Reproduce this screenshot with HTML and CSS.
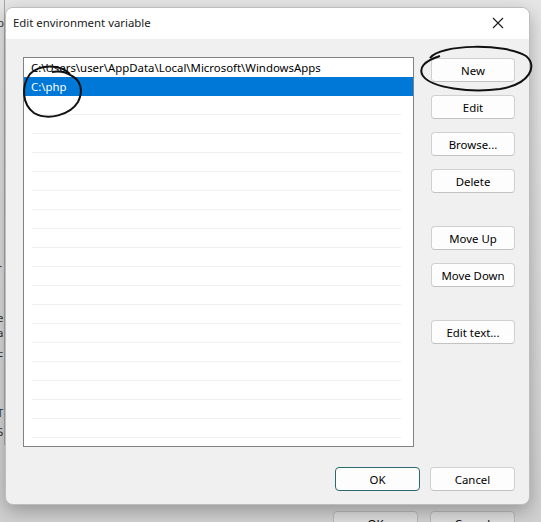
FILE: index.html
```html
<!DOCTYPE html>
<html lang="en">
<head>
    <meta charset="UTF-8">
    <meta name="viewport" content="width=device-width, initial-scale=1.0">
    <title>Edit environment variable</title>
    <link rel="stylesheet" href="styles.css">
</head>
<body>
    <div class="backwin">
        <div class="back-side">
            <span class="frag f-b">b</span>
            <span class="frag f-r">r</span>
            <span class="frag f-c">:</span>
            <span class="frag f-e">e</span>
            <span class="frag f-a">a</span>
            <span class="frag f-f">F</span>
            <span class="frag f-t">T</span>
            <span class="frag f-s">S</span>
        </div>
        <div class="back-footer">
            <button class="back-btn">OK</button>
            <button class="back-btn">Cancel</button>
        </div>
    </div>

    <div class="dialog">
        <div class="titlebar">
            <span class="title">Edit environment variable</span>
            <svg class="close" width="12" height="12" viewBox="0 0 12 12">
                <path d="M1 1 L11 11 M11 1 L1 11" stroke="#1a1a1a" stroke-width="1.1" fill="none"/>
            </svg>
        </div>

        <div class="content">
            <div class="listbox">
                <div class="row">C:\Users\user\AppData\Local\Microsoft\WindowsApps</div>
                <div class="row selected">C:\php</div>
                <div class="row empty"></div>
                <div class="row empty"></div>
                <div class="row empty"></div>
                <div class="row empty"></div>
                <div class="row empty"></div>
                <div class="row empty"></div>
                <div class="row empty"></div>
                <div class="row empty"></div>
                <div class="row empty"></div>
                <div class="row empty"></div>
                <div class="row empty"></div>
                <div class="row empty"></div>
                <div class="row empty"></div>
                <div class="row empty"></div>
                <div class="row empty"></div>
                <div class="row empty"></div>
                <div class="row empty"></div>
                <div class="row empty"></div>
            </div>

            <div class="actions">
                <button class="btn">New</button>
                <button class="btn">Edit</button>
                <button class="btn">Browse...</button>
                <button class="btn">Delete</button>
                <button class="btn spaced">Move Up</button>
                <button class="btn">Move Down</button>
                <button class="btn spaced">Edit text...</button>
            </div>
        </div>

        <div class="footer">
            <button class="btn wide default">OK</button>
            <button class="btn wide">Cancel</button>
        </div>
    </div>

    <!-- hand drawn marks on the screenshot -->
    <svg class="marks" width="541" height="522" viewBox="0 0 541 522">
        <path d="M430 58 C 440 44, 505 43, 526 56 C 538 66, 530 84, 500 89 C 470 93, 432 88, 423 76 C 418 68, 424 61, 440 56"
              stroke="#111" stroke-width="2" fill="none"/>
        <path d="M70 74 C 60 64, 40 64, 30 74 C 21 86, 22 104, 34 113 C 48 121, 70 115, 78 102 C 84 90, 80 80, 72 76 C 66 72, 58 71, 52 72"
              stroke="#111" stroke-width="2" fill="none"/>
    </svg>
</body>
</html>
```

FILE: styles.css
```css
* {
    box-sizing: border-box;
}

body {
    margin: 0;
    width: 541px;
    height: 522px;
    overflow: hidden;
    position: relative;
    background-color: #d6d6d6;
    font-family: 'Noto Sans', 'Open Sans', sans-serif;
    font-size: 11.4px;
    color: #000;
}

button {
    font-family: inherit;
    font-size: 11.4px;
    color: #000;
}

/* window behind the dialog */
.backwin {
    height: 522px;
    display: flex;
    flex-direction: column;
    background: linear-gradient(#e6e6e6, #d0d0d0);
}

.back-side {
    width: 5px;
    height: 445px;
    border-right: 1px solid #a9a9a9;
    display: flex;
    flex-direction: column;
    overflow: hidden;
    color: #333;
}

.frag {
    display: block;
    height: 14px;
    line-height: 14px;
    margin-left: -3px;
}

.f-b { margin-top: 16px; }
.f-r { margin-top: 231px; }
.f-c { margin-top: 14px; }
.f-e { margin-top: 8px; }
.f-a { margin-top: 1px; }
.f-f { margin-top: 9px; }
.f-t { margin-top: 43px; }
.f-s { margin-top: 5px; }

.back-footer {
    margin-top: auto;
    margin-bottom: -13px;
    display: flex;
    gap: 12px;
    padding-left: 333px;
}

.back-btn {
    width: 85px;
    height: 24px;
    background-color: #dcdcdc;
    border: 1px solid #b8b8b8;
    border-radius: 4px;
    padding: 0;
}

/* the dialog */
.dialog {
    position: absolute;
    left: 5px;
    top: 7px;
    width: 525px;
    height: 498px;
    background-color: #f0f0f0;
    border: 1px solid #bdbdbd;
    border-radius: 8px;
    box-shadow: 0 6px 18px rgba(0, 0, 0, 0.28);
    overflow: hidden;
}

.titlebar {
    height: 31px;
    background-color: #fff;
    display: flex;
    align-items: center;
    justify-content: space-between;
    padding: 0 25px 2px 7px;
}

.title {
    color: #1a1a1a;
}

.content {
    display: grid;
    grid-template-columns: 391px 84px;
    column-gap: 17px;
    padding: 18px 14px 0 17px;
}

.listbox {
    height: 390px;
    background-color: #fff;
    border: 1px solid #828282;
    overflow: hidden;
}

.row {
    height: 19px;
    line-height: 19px;
    padding-left: 7px;
    white-space: nowrap;
}

.row.selected {
    background-color: #0078d7;
    color: #fff;
}

.row.empty {
    margin: 0 12px 0 8px;
    border-bottom: 1px solid #eef0f2;
}

.actions {
    display: flex;
    flex-direction: column;
    gap: 13px;
    padding-top: 1px;
}

.btn {
    height: 24px;
    width: 84px;
    padding: 0;
    background-color: #fdfdfd;
    border: 1px solid #d0d0d0;
    border-bottom-color: #c2c2c2;
    border-radius: 4px;
}

.btn.spaced {
    margin-top: 20px;
}

.footer {
    display: flex;
    justify-content: flex-end;
    gap: 10px;
    padding: 20px 14px 0 0;
}

.btn.wide {
    width: 85px;
}

.btn.default {
    border: 1px solid #2b6a70;
}

.marks {
    position: absolute;
    left: 0;
    top: 0;
    pointer-events: none;
}
```
